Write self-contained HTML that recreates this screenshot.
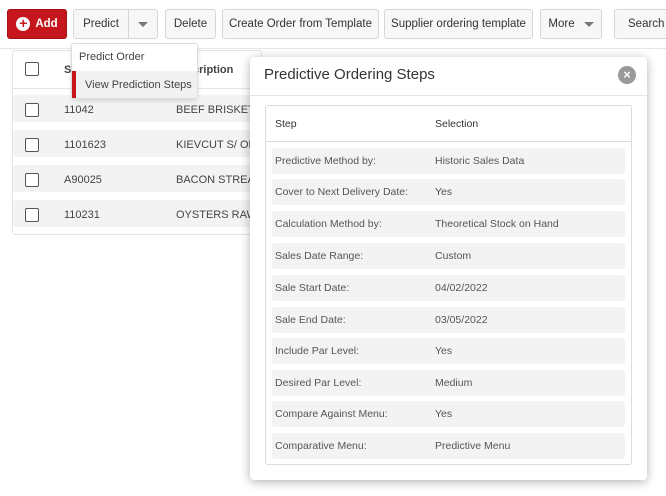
<!DOCTYPE html>
<html><head><style>
*{box-sizing:border-box;margin:0;padding:0}
body{width:666px;height:496px;overflow:hidden;background:#fff;font-family:"Liberation Sans",sans-serif;font-size:11px;color:#333;position:relative}
.abs{position:absolute}
.btn{position:absolute;top:9px;height:30px;border:1px solid #d6d6d6;border-radius:3px;background:#f7f7f7;font-size:11.5px;color:#333;display:flex;align-items:center;justify-content:center}
.cb{position:absolute;width:14px;height:14px;border:1.5px solid #555;border-radius:2px;background:#fff}
.row{position:absolute;left:13px;width:250px;height:27px;background:#f3f3f3;border-radius:3px}
.rt{position:absolute;font-size:11px;color:#444}
.mr{position:absolute;left:272px;width:353px;height:26px;background:#f3f3f3;border-radius:3px;font-size:10.5px;color:#555}
.mr span{position:absolute;top:7px}
</style></head><body>
<div class="btn" style="left:7px;width:60px;background:#c4161c;border-color:#a01015;color:#fff;font-weight:bold;">
<span style="display:inline-block;width:14px;height:14px;border-radius:50%;background:#fff;color:#c4161c;font-size:14px;line-height:13px;text-align:center;margin-right:5px;">+</span>Add</div>
<div class="btn" style="left:73px;width:56px;border-radius:3px 0 0 3px">Predict</div>
<div class="btn" style="left:128px;width:30px;border-radius:0 3px 3px 0"><span style="width:0;height:0;border-left:5px solid transparent;border-right:5px solid transparent;border-top:5px solid #777"></span></div>
<div class="btn" style="left:165px;width:51px">Delete</div>
<div class="btn" style="left:222px;width:157px">Create Order from Template</div>
<div class="btn" style="left:384px;width:149px">Supplier ordering template</div>
<div class="btn" style="left:540px;width:62px">More<span style="margin-left:9px;width:0;height:0;border-left:5px solid transparent;border-right:5px solid transparent;border-top:5px solid #777"></span></div>
<div class="btn" style="left:614px;width:60px;justify-content:flex-start;padding-left:13px">Search</div>
<div class="abs" style="left:0;top:48px;width:666px;height:1px;background:#e6e6e6"></div>
<div class="abs" style="left:12px;top:50px;width:250px;height:185px;border:1px solid #e4e4e4;border-radius:3px"></div>
<div class="abs" style="left:12px;top:88px;width:250px;height:1px;background:#e4e4e4"></div>
<div class="cb" style="left:25px;top:62px"></div>
<div class="rt" style="left:64px;top:64px;font-weight:bold">S</div>
<div class="rt" style="left:193px;top:64px;font-weight:bold;color:#444">cription</div>
<div class="row" style="top:95px"></div><div class="cb" style="left:25px;top:103px"></div><div class="rt" style="left:64px;top:104px">11042</div><div class="rt" style="left:176px;top:104px">BEEF BRISKET</div>
<div class="row" style="top:130px"></div><div class="cb" style="left:25px;top:138px"></div><div class="rt" style="left:64px;top:139px">1101623</div><div class="rt" style="left:176px;top:139px">KIEVCUT S/ ON</div>
<div class="row" style="top:165px"></div><div class="cb" style="left:25px;top:173px"></div><div class="rt" style="left:64px;top:174px">A90025</div><div class="rt" style="left:176px;top:174px">BACON STREAKY</div>
<div class="row" style="top:200px"></div><div class="cb" style="left:25px;top:208px"></div><div class="rt" style="left:64px;top:209px">110231</div><div class="rt" style="left:176px;top:209px">OYSTERS RAW/</div>
<div class="abs" style="left:71px;top:43px;width:127px;height:56px;background:#fff;border:1px solid #ddd;border-radius:3px;box-shadow:0 2px 4px rgba(0,0,0,.12)"></div>
<div class="abs" style="left:79px;top:51px;font-size:11px;color:#444">Predict Order</div>
<div class="abs" style="left:72px;top:71px;width:125px;height:27px;background:#f1f1f1;border-left:4px solid #c4161c"></div>
<div class="abs" style="left:85px;top:79px;font-size:11px;color:#444">View Prediction Steps</div>
<div class="abs" style="left:250px;top:57px;width:397px;height:423px;background:#fff;border-radius:4px;box-shadow:0 2px 10px rgba(0,0,0,.3)"></div>
<div class="abs" style="left:250px;top:95px;width:397px;height:1px;background:#e5e5e5"></div>
<div class="abs" style="left:264px;top:66px;font-size:15px;color:#333">Predictive Ordering Steps</div>
<div class="abs" style="left:618px;top:66px;width:18px;height:18px;border-radius:50%;background:#9a9a9a;color:#fff;font-size:13px;font-weight:bold;line-height:18px;text-align:center">×</div>
<div class="abs" style="left:265px;top:105px;width:367px;height:360px;border:1px solid #dcdcdc;border-radius:3px"></div>
<div class="abs" style="left:265px;top:141px;width:367px;height:1px;background:#dcdcdc"></div>
<div class="abs" style="left:275px;top:118px;font-size:10.5px;color:#333">Step</div>
<div class="abs" style="left:435px;top:118px;font-size:10.5px;color:#333">Selection</div>
<div class="mr" style="top:148px"><span style="left:3px">Predictive Method by:</span><span style="left:163px">Historic Sales Data</span></div>
<div class="mr" style="top:179px"><span style="left:3px">Cover to Next Delivery Date:</span><span style="left:163px">Yes</span></div>
<div class="mr" style="top:211px"><span style="left:3px">Calculation Method by:</span><span style="left:163px">Theoretical Stock on Hand</span></div>
<div class="mr" style="top:243px"><span style="left:3px">Sales Date Range:</span><span style="left:163px">Custom</span></div>
<div class="mr" style="top:275px"><span style="left:3px">Sale Start Date:</span><span style="left:163px">04/02/2022</span></div>
<div class="mr" style="top:307px"><span style="left:3px">Sale End Date:</span><span style="left:163px">03/05/2022</span></div>
<div class="mr" style="top:338px"><span style="left:3px">Include Par Level:</span><span style="left:163px">Yes</span></div>
<div class="mr" style="top:370px"><span style="left:3px">Desired Par Level:</span><span style="left:163px">Medium</span></div>
<div class="mr" style="top:401px"><span style="left:3px">Compare Against Menu:</span><span style="left:163px">Yes</span></div>
<div class="mr" style="top:433px"><span style="left:3px">Comparative Menu:</span><span style="left:163px">Predictive Menu</span></div>
</body></html>
